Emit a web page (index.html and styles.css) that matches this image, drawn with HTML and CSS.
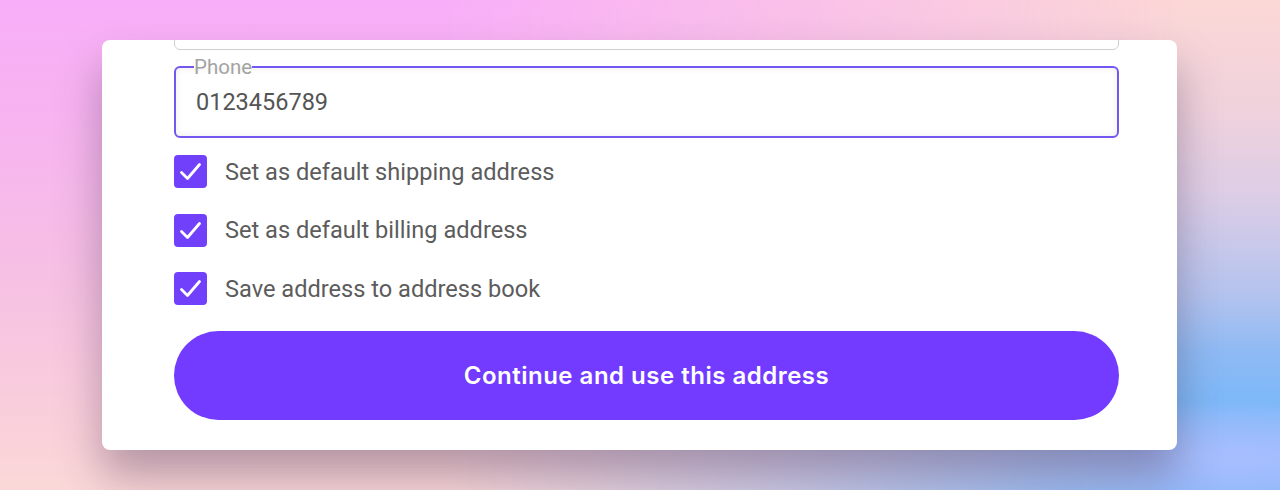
FILE: index.html
```html
<!DOCTYPE html>
<html>
<head>
<meta charset="utf-8">
<link rel="stylesheet" href="styles.css">
</head>
<body>
<div class="stage">
  <div class="card">
    <div class="form">
      <div class="field-prev"></div>
      <fieldset class="field field-active">
        <legend class="legend">Phone</legend>
        <div class="value">0123456789</div>
      </fieldset>
      <div class="checks">
        <label class="check">
          <span class="box"><svg viewBox="0 0 33 33" width="33" height="33"><path d="M7.5 17.5 L13.5 23.5 L25.5 9.5" fill="none" stroke="#fff" stroke-width="2.8" stroke-linecap="round" stroke-linejoin="round"/></svg></span>
          <span class="check-label">Set as default shipping address</span>
        </label>
        <label class="check">
          <span class="box"><svg viewBox="0 0 33 33" width="33" height="33"><path d="M7.5 17.5 L13.5 23.5 L25.5 9.5" fill="none" stroke="#fff" stroke-width="2.8" stroke-linecap="round" stroke-linejoin="round"/></svg></span>
          <span class="check-label">Set as default billing address</span>
        </label>
        <label class="check">
          <span class="box"><svg viewBox="0 0 33 33" width="33" height="33"><path d="M7.5 17.5 L13.5 23.5 L25.5 9.5" fill="none" stroke="#fff" stroke-width="2.8" stroke-linecap="round" stroke-linejoin="round"/></svg></span>
          <span class="check-label">Save address to address book</span>
        </label>
      </div>
      <button class="submit">Continue and use this address</button>
    </div>
  </div>
</div>
</body>
</html>
```
FILE: styles.css
```css
html, body {
  margin: 0;
  padding: 0;
}
body {
  width: 1280px;
  height: 490px;
  overflow: hidden;
  font-family: Roboto, "Liberation Sans", sans-serif;
}
.stage {
  position: relative;
  width: 1280px;
  height: 490px;
  box-sizing: border-box;
  padding: 40px 103px 40px 102px;
  background:
    radial-gradient(ellipse 200px 60px at 1230px 460px, rgba(170,190,255,0.8) 0%, rgba(170,190,255,0) 100%),
    linear-gradient(180deg, #fcd7d6 0%, #f0d2dc 22%, #dccde6 40%, #b4c3ee 60%, #8ebaf4 72%, #7db8f8 82%, #9bbcfb 93%, #8ab8f8 100%);
}
.stage::before {
  content: "";
  position: absolute;
  inset: 0;
  background: linear-gradient(180deg, #f8aef8 0%, #f7b4f0 25%, #f6bfe4 55%, #f9ccdc 80%, #fbd8d8 100%);
  -webkit-mask-image: linear-gradient(90deg, #000 0%, #000 35%, rgba(0,0,0,0.6) 60%, transparent 92%);
  mask-image: linear-gradient(90deg, #000 0%, #000 35%, rgba(0,0,0,0.6) 60%, transparent 92%);
}
.card {
  position: relative;
  z-index: 1;
  height: 410px;
  background: #fff;
  border-radius: 8px;
  overflow: hidden;
  box-shadow: 0 26px 44px rgba(70, 50, 80, 0.38);
}
.form {
  width: 945px;
  margin: 0 0 0 72px;
  display: flex;
  flex-direction: column;
}
.field-prev {
  height: 40px;
  margin-top: -30px;
  box-sizing: border-box;
  border: 1.5px solid #cfcfcf;
  border-radius: 6px;
}
.field {
  margin: 8px 0 0 0;
  height: 80px;
  box-sizing: border-box;
  padding: 0 18px;
  border-radius: 6px;
  min-width: 0;
}
.field-active {
  border: 2px solid #7457f0;
  box-shadow: inset 0 0 7px rgba(0, 0, 0, 0.08);
}
.legend {
  padding: 0;
  font-size: 20.5px;
  line-height: 18px;
  color: #a3a3a3;
}
.value {
  font-size: 23.5px;
  line-height: 28px;
  color: #545454;
  padding: 12px 0 0 2px;
}
.checks {
  display: flex;
  flex-direction: column;
  gap: 25.5px;
  margin-top: 17px;
}
.check {
  display: flex;
  align-items: center;
  gap: 18px;
  height: 33px;
}
.box {
  width: 33px;
  height: 33px;
  border-radius: 4px;
  background: #7040fb;
  display: block;
  flex: none;
}
.box svg {
  display: block;
}
.check-label {
  font-size: 23.6px;
  color: #5c5c5c;
}
.submit {
  margin-top: 25.5px;
  height: 89px;
  border: none;
  border-radius: 45px;
  background: #723bff;
  color: #fff;
  font-family: Inter, "Open Sans", sans-serif;
  font-weight: 600;
  font-size: 24px;
  letter-spacing: 0.5px;
}
```
